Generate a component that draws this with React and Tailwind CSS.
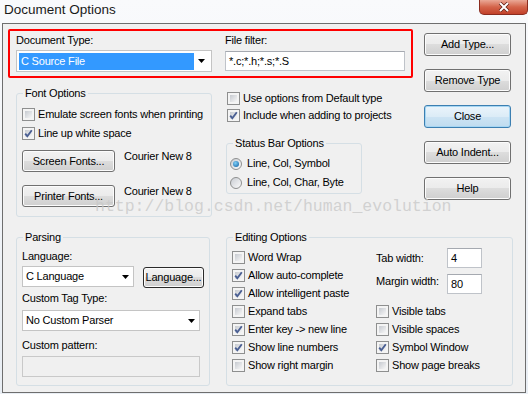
import React from "react";

const btn =
  "flex items-center justify-center border border-[#707070] rounded-[3px] bg-[linear-gradient(#f2f2f2,#ebebeb_50%,#dddddd_50%,#cfcfcf)] shadow-[inset_0_0_0_1px_#fcfcfc]";

function Button({ children, className = "" }) {
  return <div className={`${btn} ${className}`}>{children}</div>;
}

function Arrow() {
  return (
    <svg width="7" height="4" viewBox="0 0 7 4" className="ml-auto mr-[4px] shrink-0">
      <polygon points="0,0 7,0 3.5,4" fill="#000" />
    </svg>
  );
}

function CheckBox({ checked, label, className = "" }) {
  return (
    <div className={`flex items-center gap-[3px] ${className}`}>
      <span className="relative flex w-[13px] h-[13px] shrink-0 border border-[#8e8f8f] bg-[#f4f4f4] p-[2px]">
        <span className="flex-1 bg-[linear-gradient(135deg,#c6cad0,#f7f7f7)]" />
        {checked && (
          <svg width="11" height="11" viewBox="0 0 11 11" className="absolute left-0 top-0">
            <path d="M2.2 5.6 L4.3 8.2 L8.8 2.2" fill="none" stroke="#4a5f93" strokeWidth="1.9" />
          </svg>
        )}
      </span>
      <span>{label}</span>
    </div>
  );
}

function Radio({ checked, label }) {
  return (
    <div className="flex items-center gap-[5px]">
      <span className="flex w-[12px] h-[12px] shrink-0 items-center justify-center rounded-full border border-[#8e8f8f] bg-[linear-gradient(135deg,#c9cdd3,#fbfbfb)]">
        {checked && (
          <span className="w-[6px] h-[6px] rounded-full bg-[radial-gradient(circle_at_40%_35%,#7fd0f8,#0d5b9e)]" />
        )}
      </span>
      <span>{label}</span>
    </div>
  );
}

function Group({ title, className = "", children }) {
  return (
    <div className={`relative border border-[#d5dfe5] rounded-[3px] ${className}`}>
      <span className="absolute left-[6px] top-[-7px] bg-[#f0f0f0] px-[2px] leading-[13px]">
        {title}
      </span>
      {children}
    </div>
  );
}

export default function App() {
  return (
    <div className="relative w-[528px] h-[394px] overflow-hidden bg-[linear-gradient(#f9fafc,#e9eef4)] font-['Liberation_Sans',Arial,sans-serif] text-[11px] leading-[13px] tracking-[-0.2px] text-black">
      {/* title bar */}
      <div className="flex h-[23px] items-start justify-between">
        <span className="pl-[4px] pt-[2px] text-[13.5px] leading-[16px] tracking-normal text-[#1a1a1a]">
          Document Options
        </span>
        <div className="flex w-[49px] h-[15px] items-center justify-center rounded-b-[5px] border border-t-0 border-[#8a2c1f] bg-[linear-gradient(#eaa896,#d4644a_50%,#c2412a)]">
          <svg width="12" height="10" viewBox="0 0 12 10">
            <path d="M2 1 L10 9 M10 1 L2 9" stroke="#5a1a10" strokeWidth="3.4" />
            <path d="M2 1 L10 9 M10 1 L2 9" stroke="#fff" strokeWidth="2" />
          </svg>
        </div>
      </div>

      {/* client area */}
      <div className="ml-[2px] w-[524px] h-[370px] border border-[#6e6e6e] bg-[#f0f0f0]">
        <div className="flex">
          <div className="ml-[5px] mt-[5px] w-[405px]">
            {/* red highlight */}
            <div className="flex h-[49px] border-2 border-[#ff0000] rounded-[2px] pl-[6px] pt-[3px]">
              <div className="w-[196px]">
                <div>Document Type:</div>
                <div className="mt-[3px] flex h-[22px] items-center border border-[#c4c4c4] bg-white px-[2px]">
                  <span className="flex h-[17px] w-[175px] items-center bg-[#3399ff] pl-[2px] text-white">
                    C Source File
                  </span>
                  <Arrow />
                </div>
              </div>
              <div className="ml-[13px] w-[180px]">
                <div>File filter:</div>
                <div className="mt-[4px] flex h-[20px] items-center border border-[#bfc3c9] border-t-[#a5a9b0] bg-white pl-[3px]">
                  *.c;*.h;*.s;*.S
                </div>
              </div>
            </div>

            <div className="mt-[15px] flex">
              <Group title="Font Options" className="ml-[8px] w-[196px] h-[124px]">
                <div className="pl-[5px] pt-[14px]">
                  <CheckBox label="Emulate screen fonts when printing" />
                  <CheckBox checked label="Line up white space" className="mt-[6px]" />
                  <div className="mt-[10px] flex items-start">
                    <Button className="w-[93px] h-[22px]">Screen Fonts...</Button>
                    <span className="ml-[9px]">Courier New 8</span>
                  </div>
                  <div className="mt-[13px] flex items-start">
                    <Button className="w-[93px] h-[22px]">Printer Fonts...</Button>
                    <span className="ml-[9px]">Courier New 8</span>
                  </div>
                </div>
              </Group>

              <div className="ml-[14px] flex flex-col">
                <div className="mt-[-1px] pl-[1px]">
                  <CheckBox label="Use options from Default type" />
                  <CheckBox checked label="Include when adding to projects" className="mt-[4px]" />
                </div>
                <Group title="Status Bar Options" className="mt-[21px] w-[136px] h-[51px]">
                  <div className="pl-[3px] pt-[13px]">
                    <Radio checked label="Line, Col, Symbol" />
                    <div className="mt-[6px]">
                      <Radio label="Line, Col, Char, Byte" />
                    </div>
                  </div>
                </Group>
              </div>
            </div>
          </div>

          {/* right buttons */}
          <div className="ml-[11px] mt-[9px] flex w-[87px] flex-col gap-[13px]">
            <Button className="h-[23px]">Add Type...</Button>
            <Button className="h-[23px]">Remove Type</Button>
            <div className="flex h-[23px] items-center justify-center rounded-[3px] border border-[#3c7fb1] bg-[linear-gradient(#eaf4fb,#dcecf7_50%,#cde4f4_50%,#c0dcef)] shadow-[inset_0_0_0_1px_#a6d6f3]">
              Close
            </div>
            <Button className="h-[23px]">Auto Indent...</Button>
            <Button className="h-[23px]">Help</Button>
          </div>
        </div>

        {/* bottom groups */}
        <div className="mt-[20px] flex">
          <Group title="Parsing" className="ml-[13px] w-[194px] h-[149px]">
            <div className="pl-[5px] pt-[12px]">
              <div>Language:</div>
              <div className="mt-[3px] flex items-start">
                <div className="flex h-[21px] w-[112px] items-center border border-[#c4c4c4] bg-white pl-[3px]">
                  <span>C Language</span>
                  <Arrow />
                </div>
                <div className="ml-[9px] mt-[1px] flex h-[21px] w-[61px] items-center justify-center rounded-[3px] border border-[#2b2b2b] bg-[linear-gradient(#f2f2f2,#ebebeb_50%,#dddddd_50%,#cfcfcf)] shadow-[inset_0_0_0_1px_#fcfcfc]">
                  Language...
                </div>
              </div>
              <div className="mt-[4px]">Custom Tag Type:</div>
              <div className="mt-[5px] flex h-[21px] w-[178px] items-center border border-[#c4c4c4] bg-white pl-[3px]">
                <span>No Custom Parser</span>
                <Arrow />
              </div>
              <div className="mt-[8px]">Custom pattern:</div>
              <div className="mt-[4px] h-[21px] w-[178px] border border-[#c9c9c9] bg-[#f0f0f0]" />
            </div>
          </Group>

          <Group title="Editing Options" className="ml-[16px] w-[287px] h-[149px]">
            <div className="flex pt-[10px]">
              <div className="w-[149px] pl-[5px]">
                {[
                  ["Word Wrap", false],
                  ["Allow auto-complete", true],
                  ["Allow intelligent paste", true],
                  ["Expand tabs", false],
                  ["Enter key -> new line", true],
                  ["Show line numbers", true],
                  ["Show right margin", false],
                ].map(([label, checked]) => (
                  <CheckBox key={label} label={label} checked={checked} className="h-[18px]" />
                ))}
              </div>
              <div className="flex-1">
                <div className="flex h-[20px] items-center">
                  <span className="w-[71px]">Tab width:</span>
                  <div className="flex h-[20px] w-[35px] items-center border border-[#bfc3c9] border-t-[#a5a9b0] bg-white pl-[3px]">
                    4
                  </div>
                </div>
                <div className="mt-[6px] flex h-[20px] items-center">
                  <span className="w-[71px] mb-[5px]">Margin width:</span>
                  <div className="flex h-[20px] w-[35px] items-center border border-[#bfc3c9] border-t-[#a5a9b0] bg-white pl-[3px]">
                    80
                  </div>
                </div>
                <div className="mt-[8px]">
                  <CheckBox label="Visible tabs" className="h-[18px]" />
                  <CheckBox label="Visible spaces" className="h-[18px]" />
                  <CheckBox checked label="Symbol Window" className="h-[18px]" />
                  <CheckBox label="Show page breaks" className="h-[18px]" />
                </div>
              </div>
            </div>
          </Group>
        </div>
      </div>

      {/* watermark */}
      <span className="pointer-events-none absolute left-[95px] top-[197px] font-['Liberation_Mono',monospace] text-[16.5px] leading-[20px] tracking-normal text-[#c9c9c9]/80">
        http://blog.csdn.net/human_evolution
      </span>
    </div>
  );
}
